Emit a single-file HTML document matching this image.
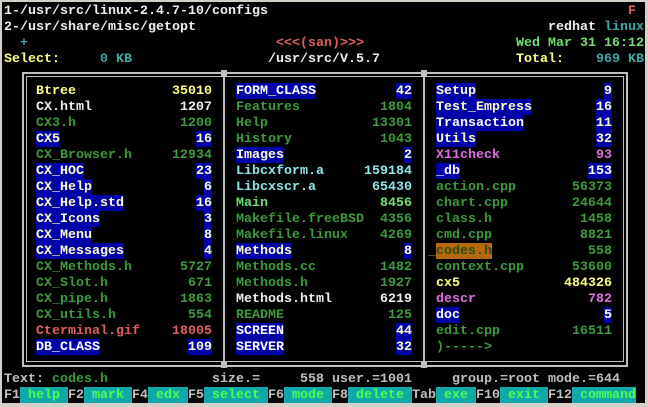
<!DOCTYPE html>
<html><head><meta charset="utf-8"><style>
html,body{margin:0;padding:0}
body{width:648px;height:407px;background:#d4d0c8;position:relative;overflow:hidden}
#s{position:absolute;left:2px;top:2px;width:643px;height:401px;background:#000}
.t{position:absolute;font-family:"Liberation Mono",monospace;font-weight:bold;font-size:13.33px;line-height:17px;height:16px;white-space:pre;overflow:hidden}
.w{color:#f0f0f0}.g{color:#c0c0c0}.y{color:#ffff80}.dg{color:#3c9c3c}.bg{color:#70e070}
.c{color:#90e8e8}.dc{color:#40a8a8}.r{color:#e06060}.m{color:#e070e0}
.b{background:#0000a8;color:#ffffc8}
.o{background:#b8680c;color:#2a4a18}
.k{background:#10a8a8;color:#50ff50}
.line{position:absolute;background:#c0c0c0}
</style></head><body><div id="s"></div>
<div class="line" style="left:22px;top:72px;width:606px;height:2px"></div>
<div class="line" style="left:22px;top:365px;width:606px;height:2px"></div>
<div class="line" style="left:22px;top:72px;width:2px;height:295px"></div>
<div class="line" style="left:626px;top:72px;width:2px;height:295px"></div>
<div class="line" style="left:26px;top:76px;width:598px;height:1px"></div>
<div class="line" style="left:26px;top:361px;width:598px;height:1px"></div>
<div class="line" style="left:26px;top:76px;width:1px;height:286px"></div>
<div class="line" style="left:623px;top:76px;width:1px;height:286px"></div>
<div class="line" style="left:223px;top:77px;width:2px;height:284px"></div>
<div class="line" style="left:423px;top:77px;width:2px;height:284px"></div>
<div class="line" style="left:221px;top:70px;width:6px;height:9px"></div>
<div class="line" style="left:421px;top:70px;width:6px;height:9px"></div>
<div class="line" style="left:221px;top:359px;width:6px;height:9px"></div>
<div class="line" style="left:421px;top:359px;width:6px;height:9px"></div>
<div style="position:absolute;left:27px;top:77px;width:196px;height:284px;background:#000"></div>
<div style="position:absolute;left:225px;top:77px;width:198px;height:284px;background:#000"></div>
<div style="position:absolute;left:425px;top:77px;width:198px;height:284px;background:#000"></div>

<div class="t w" style="left:4px;top:3px">1-/usr/src/linux-2.4.7-10/configs</div>
<div class="t r" style="left:628px;top:3px">F</div>
<div class="t w" style="left:4px;top:19px">2-/usr/share/misc/getopt</div>
<div class="t w" style="left:548px;top:19px">redhat</div>
<div class="t dc" style="left:604px;top:19px">linux</div>
<div class="t dc" style="left:20px;top:35px">+</div>
<div class="t r" style="left:276px;top:35px">&lt;&lt;&lt;(san)&gt;&gt;&gt;</div>
<div class="t bg" style="left:516px;top:35px">Wed Mar 31 16:12</div>
<div class="t y" style="left:4px;top:51px">Select:</div>
<div class="t dc" style="left:100px;top:51px">0 KB</div>
<div class="t w" style="left:268px;top:51px">/usr/src/V.5.7</div>
<div class="t y" style="left:516px;top:51px">Total:</div>
<div class="t dc" style="left:596px;top:51px">969 KB</div>

<div class="t y" style="left:36px;top:83px">Btree</div><div class="t y" style="right:436px;top:83px">35010</div>
<div class="t w" style="left:36px;top:99px">CX.html</div><div class="t w" style="right:436px;top:99px">1207</div>
<div class="t dg" style="left:36px;top:115px">CX3.h</div><div class="t dg" style="right:436px;top:115px">1200</div>
<div class="t b" style="left:36px;top:131px">CX5</div><div class="t b" style="right:436px;top:131px">16</div>
<div class="t dg" style="left:36px;top:147px">CX_Browser.h</div><div class="t dg" style="right:436px;top:147px">12934</div>
<div class="t b" style="left:36px;top:163px">CX_HOC</div><div class="t b" style="right:436px;top:163px">23</div>
<div class="t b" style="left:36px;top:179px">CX_Help</div><div class="t b" style="right:436px;top:179px">6</div>
<div class="t b" style="left:36px;top:195px">CX_Help.std</div><div class="t b" style="right:436px;top:195px">16</div>
<div class="t b" style="left:36px;top:211px">CX_Icons</div><div class="t b" style="right:436px;top:211px">3</div>
<div class="t b" style="left:36px;top:227px">CX_Menu</div><div class="t b" style="right:436px;top:227px">8</div>
<div class="t b" style="left:36px;top:243px">CX_Messages</div><div class="t b" style="right:436px;top:243px">4</div>
<div class="t dg" style="left:36px;top:259px">CX_Methods.h</div><div class="t dg" style="right:436px;top:259px">5727</div>
<div class="t dg" style="left:36px;top:275px">CX_Slot.h</div><div class="t dg" style="right:436px;top:275px">671</div>
<div class="t dg" style="left:36px;top:291px">CX_pipe.h</div><div class="t dg" style="right:436px;top:291px">1863</div>
<div class="t dg" style="left:36px;top:307px">CX_utils.h</div><div class="t dg" style="right:436px;top:307px">554</div>
<div class="t r" style="left:36px;top:323px">Cterminal.gif</div><div class="t r" style="right:436px;top:323px">18005</div>
<div class="t b" style="left:36px;top:339px;color:#fff">DB_CLASS</div><div class="t b" style="right:436px;top:339px">109</div>

<div class="t b" style="left:236px;top:83px;color:#fff">FORM_CLASS</div><div class="t b" style="right:236px;top:83px">42</div>
<div class="t dg" style="left:236px;top:99px">Features</div><div class="t dg" style="right:236px;top:99px">1804</div>
<div class="t dg" style="left:236px;top:115px">Help</div><div class="t dg" style="right:236px;top:115px">13301</div>
<div class="t dg" style="left:236px;top:131px">History</div><div class="t dg" style="right:236px;top:131px">1043</div>
<div class="t b" style="left:236px;top:147px">Images</div><div class="t b" style="right:236px;top:147px">2</div>
<div class="t c" style="left:236px;top:163px">Libcxform.a</div><div class="t c" style="right:236px;top:163px">159184</div>
<div class="t c" style="left:236px;top:179px">Libcxscr.a</div><div class="t c" style="right:236px;top:179px">65430</div>
<div class="t bg" style="left:236px;top:195px">Main</div><div class="t bg" style="right:236px;top:195px">8456</div>
<div class="t dg" style="left:236px;top:211px">Makefile.freeBSD</div><div class="t dg" style="right:236px;top:211px">4356</div>
<div class="t dg" style="left:236px;top:227px">Makefile.linux</div><div class="t dg" style="right:236px;top:227px">4269</div>
<div class="t b" style="left:236px;top:243px">Methods</div><div class="t b" style="right:236px;top:243px">8</div>
<div class="t dg" style="left:236px;top:259px">Methods.cc</div><div class="t dg" style="right:236px;top:259px">1482</div>
<div class="t dg" style="left:236px;top:275px">Methods.h</div><div class="t dg" style="right:236px;top:275px">1927</div>
<div class="t w" style="left:236px;top:291px">Methods.html</div><div class="t w" style="right:236px;top:291px">6219</div>
<div class="t dg" style="left:236px;top:307px">README</div><div class="t dg" style="right:236px;top:307px">125</div>
<div class="t b" style="left:236px;top:323px;color:#fff">SCREEN</div><div class="t b" style="right:236px;top:323px">44</div>
<div class="t b" style="left:236px;top:339px;color:#fff">SERVER</div><div class="t b" style="right:236px;top:339px">32</div>

<div class="t b" style="left:436px;top:83px">Setup</div><div class="t b" style="right:36px;top:83px">9</div>
<div class="t b" style="left:436px;top:99px">Test_Empress</div><div class="t b" style="right:36px;top:99px">16</div>
<div class="t b" style="left:436px;top:115px;color:#fff">Transaction</div><div class="t b" style="right:36px;top:115px">11</div>
<div class="t b" style="left:436px;top:131px">Utils</div><div class="t b" style="right:36px;top:131px">32</div>
<div class="t m" style="left:436px;top:147px">X11check</div><div class="t m" style="right:36px;top:147px">93</div>
<div class="t b" style="left:436px;top:163px;color:#fff">_db</div><div class="t b" style="right:36px;top:163px;color:#fff">153</div>
<div class="t dg" style="left:436px;top:179px">action.cpp</div><div class="t dg" style="right:36px;top:179px">56373</div>
<div class="t dg" style="left:436px;top:195px">chart.cpp</div><div class="t dg" style="right:36px;top:195px">24644</div>
<div class="t dg" style="left:436px;top:211px">class.h</div><div class="t dg" style="right:36px;top:211px">1458</div>
<div class="t dg" style="left:436px;top:227px">cmd.cpp</div><div class="t dg" style="right:36px;top:227px">8821</div>
<div class="t dg" style="left:428px;top:243px">_</div>
<div class="t o" style="left:436px;top:243px">codes.h</div><div class="t dg" style="right:36px;top:243px">558</div>
<div class="t dg" style="left:436px;top:259px">context.cpp</div><div class="t dg" style="right:36px;top:259px">53600</div>
<div class="t y" style="left:436px;top:275px">cx5</div><div class="t y" style="right:36px;top:275px">484326</div>
<div class="t m" style="left:436px;top:291px">descr</div><div class="t m" style="right:36px;top:291px">782</div>
<div class="t b" style="left:436px;top:307px;color:#fff">doc</div><div class="t b" style="right:36px;top:307px;color:#fff">5</div>
<div class="t dg" style="left:436px;top:323px">edit.cpp</div><div class="t dg" style="right:36px;top:323px">16511</div>
<div class="t dg" style="left:436px;top:339px">)-----&gt;</div>

<div class="t g" style="left:4px;top:371px">Text:</div>
<div class="t dg" style="left:52px;top:371px">codes.h</div>
<div class="t g" style="left:212px;top:371px">size.=</div>
<div class="t g" style="left:300px;top:371px">558 user.=1001</div>
<div class="t g" style="left:452px;top:371px">group.=root mode.=644</div>

<div class="t g" style="left:4px;top:387px">F1</div><div class="t k" style="left:20px;top:387px"> help </div>
<div class="t g" style="left:68px;top:387px">F2</div><div class="t k" style="left:84px;top:387px"> mark </div>
<div class="t g" style="left:132px;top:387px">F4</div><div class="t k" style="left:148px;top:387px"> edx </div>
<div class="t g" style="left:188px;top:387px">F5</div><div class="t k" style="left:204px;top:387px"> select </div>
<div class="t g" style="left:268px;top:387px">F6</div><div class="t k" style="left:284px;top:387px"> mode </div>
<div class="t g" style="left:332px;top:387px">F8</div><div class="t k" style="left:348px;top:387px"> delete </div>
<div class="t g" style="left:412px;top:387px">Tab</div><div class="t k" style="left:436px;top:387px"> exe </div>
<div class="t g" style="left:476px;top:387px">F10</div><div class="t k" style="left:500px;top:387px"> exit </div>
<div class="t g" style="left:548px;top:387px">F12</div><div class="t k" style="left:572px;top:387px"> command</div>
</body></html>
